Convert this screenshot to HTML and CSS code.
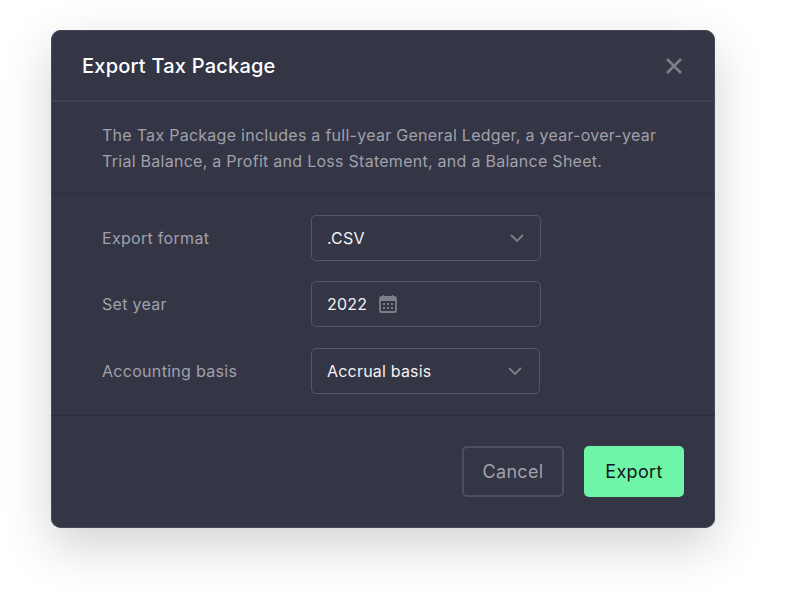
FILE: index.html
```html
<!DOCTYPE html>
<html>

<head>
	<meta http-equiv="Content-Type" content="text/html; charset=utf-8"/>
	<title>Export Tax Package</title>
	<link rel="stylesheet" href="styles.css">
</head>

<body>
<div class="modal">
	<div class="modal-header">
		<h1>Export Tax Package</h1>
		<svg class="close" width="18" height="18" viewBox="0 0 18 18">
			<path d="M2 2L16 16M16 2L2 16" fill="none" stroke="#7d7e8a" stroke-width="2.6"/>
		</svg>
	</div>
	<p class="intro">The Tax Package includes a full-year General Ledger, a year-over-year Trial Balance, a Profit and Loss Statement, and a Balance Sheet.</p>
	<div class="fields">
		<div class="row">
			<label>Export format</label>
			<div class="control">
				<span>.CSV</span>
				<svg class="chevron" width="14" height="8" viewBox="0 0 14 8">
					<path d="M1 1L7 7L13 1" fill="none" stroke="#7d7e8a" stroke-width="1.8"/>
				</svg>
			</div>
		</div>
		<div class="row">
			<label>Set year</label>
			<div class="control control-date">
				<span>2022</span>
				<svg class="calendar" width="18" height="18" viewBox="0 0 18 18">
					<path d="M4.5 0V3M13.5 0V3" stroke="#7d7e8a" stroke-width="1.4"/>
					<rect x="1" y="2" width="16" height="15" rx="1.5" fill="none" stroke="#7d7e8a" stroke-width="1.8"/>
					<rect x="1" y="2" width="16" height="4" fill="#7d7e8a"/>
					<path d="M4 8h2v2H4zM8 8h2v2H8zM12 8h2v2h-2zM4 12h2v2H4zM8 12h2v2H8zM12 12h2v2h-2z" fill="#7d7e8a"/>
				</svg>
			</div>
		</div>
		<div class="row">
			<label>Accounting basis</label>
			<div class="control control-narrow">
				<span>Accrual basis</span>
				<svg class="chevron" width="14" height="8" viewBox="0 0 14 8">
					<path d="M1 1L7 7L13 1" fill="none" stroke="#7d7e8a" stroke-width="1.8"/>
				</svg>
			</div>
		</div>
	</div>
	<div class="modal-footer">
		<button class="btn btn-cancel">Cancel</button>
		<button class="btn btn-export">Export</button>
	</div>
</div>
</body>

</html>
```

FILE: styles.css
```css
html {
	font-size: 16px;
	font-family: "Inter", sans-serif;
}

body {
	margin: 0;
	height: 599px;
	background: #fff;
	overflow: hidden;
}

h1 {
	font-size: 20px;
	font-weight: 450;
	letter-spacing: 0.22px;
	color: #fff;
	margin: 0;
}

.modal {
	width: 664px;
	height: 498px;
	box-sizing: border-box;
	margin: 30px 0 0 51px;
	background: #343545;
	border-radius: 10px;
	box-shadow: inset 0 0 0 1px #46485c, 0 18px 50px rgba(0, 0, 0, 0.18);
	display: flex;
	flex-direction: column;
}

.modal-header {
	height: 72px;
	flex: none;
	box-sizing: border-box;
	padding: 1px 32px 0 31px;
	display: flex;
	align-items: center;
	justify-content: space-between;
	border-bottom: 2px solid #3e4054;
}

.intro {
	margin: 0;
	height: 92px;
	flex: none;
	box-sizing: border-box;
	padding: 20px 40px 0 51px;
	font-size: 16px;
	line-height: 26px;
	letter-spacing: 0.27px;
	color: #a0a1ab;
	border-bottom: 1px solid #2d2e3d;
}

.fields {
	height: 222px;
	flex: none;
	box-sizing: border-box;
	padding: 21px 0 0 51px;
	border-bottom: 1px solid #2d2e3d;
	display: flex;
	flex-direction: column;
	gap: 20.4px;
}

.row {
	display: flex;
	align-items: center;
}

.row label {
	width: 209px;
	color: #a0a1ab;
	font-size: 16px;
	letter-spacing: 0.3px;
}

.control {
	width: 230px;
	height: 46px;
	box-sizing: border-box;
	padding: 0 16px 0 15px;
	border: 1px solid #53556f;
	border-radius: 5px;
	color: #f2f2f4;
	font-size: 16px;
	letter-spacing: 0.2px;
	display: flex;
	align-items: center;
	justify-content: space-between;
}

.control-date {
	justify-content: flex-start;
	gap: 12px;
}

.control-narrow {
	width: 229px;
	padding-right: 17px;
}

.modal-footer {
	flex: 1;
	padding: 0 31px 1px 0;
	display: flex;
	align-items: center;
	justify-content: flex-end;
	gap: 20px;
}

.btn {
	height: 51px;
	border-radius: 5px;
	font-family: inherit;
	font-size: 18px;
	font-weight: 400;
	letter-spacing: 0.35px;
	padding: 0;
}

.btn-cancel {
	width: 102px;
	background: transparent;
	border: 2px solid #4d4e5e;
	color: #a0a1ab;
}

.btn-export {
	width: 100px;
	background: #6ff5a8;
	border: none;
	color: #14151c;
}
```
